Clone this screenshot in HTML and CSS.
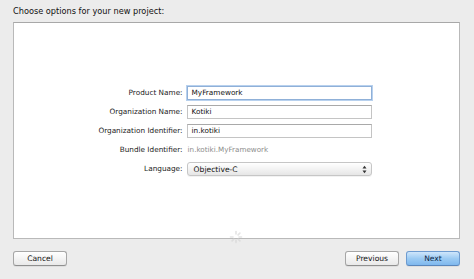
FILE: index.html
```html
<!DOCTYPE html>
<html lang="en">
<head>
    <meta charset="UTF-8">
    <title>Choose options for your new project</title>
    <link rel="stylesheet" href="styles.css">
</head>
<body>
    <div class="sheet">
        <header class="sheet-title">Choose options for your new project:</header>

        <div class="panel">
            <div class="form">
                <label class="label">Product Name:</label>
                <div class="field focused">MyFramework</div>

                <label class="label">Organization Name:</label>
                <div class="field">Kotiki</div>

                <label class="label">Organization Identifier:</label>
                <div class="field">in.kotiki</div>

                <label class="label">Bundle Identifier:</label>
                <div class="static">in.kotiki.MyFramework</div>

                <label class="label">Language:</label>
                <div class="popup">
                    <span>Objective-C</span>
                    <svg class="arrows" width="5" height="9" viewBox="0 0 5 9">
                        <path d="M0.5 3.5 L2.5 0.8 L4.5 3.5 Z" fill="#333"/>
                        <path d="M0.5 5.5 L2.5 8.2 L4.5 5.5 Z" fill="#333"/>
                    </svg>
                </div>
            </div>

            <svg class="spinner" width="14" height="14" viewBox="0 0 14 14">
                <g stroke="#d4d4d4" stroke-width="1.6" stroke-linecap="round">
                    <line x1="7" y1="1.5" x2="7" y2="4"/>
                    <line x1="10.9" y1="3.1" x2="9.1" y2="4.9"/>
                    <line x1="12.5" y1="7" x2="10" y2="7"/>
                    <line x1="10.9" y1="10.9" x2="9.1" y2="9.1"/>
                    <line x1="7" y1="12.5" x2="7" y2="10"/>
                    <line x1="3.1" y1="10.9" x2="4.9" y2="9.1"/>
                    <line x1="1.5" y1="7" x2="4" y2="7"/>
                </g>
            </svg>
        </div>

        <footer class="buttons">
            <button class="btn">Cancel</button>
            <div class="spacer"></div>
            <button class="btn">Previous</button>
            <button class="btn primary">Next</button>
        </footer>
    </div>
</body>
</html>
```

FILE: styles.css
```css
* {
    margin: 0;
    padding: 0;
    box-sizing: border-box;
}
html, body {
    width: 474px;
    height: 279px;
    overflow: hidden;
}
body {
    background-color: #ececec;
    font-family: "DejaVu Sans", "Liberation Sans", sans-serif;
    color: #111;
}
.sheet {
    display: flex;
    flex-direction: column;
    height: 100%;
    padding: 0 14px 0 13px;
}
.sheet-title {
    height: 22px;
    line-height: 22px;
    font-size: 8.2px;
}
.panel {
    position: relative;
    height: 217px;
    background-color: #fff;
    border: 1px solid #b9b9b9;
    border-top-color: #a8a8a8;
    display: flex;
    align-items: center;
    justify-content: center;
}
.form {
    display: grid;
    grid-template-columns: auto 185px;
    grid-auto-rows: 14px;
    column-gap: 4px;
    row-gap: 5px;
    margin-left: -3px;
    margin-top: 1px;
}
.label {
    font-size: 7.3px;
    text-align: right;
    line-height: 14px;
    color: #1c1c1c;
}
.field {
    font-size: 7.3px;
    line-height: 12px;
    padding: 0 4px;
    border: 1px solid #c4c4c4;
    border-top-color: #a9a9a9;
    background-color: #fff;
    color: #111;
}
.field.focused {
    border-color: #8fb0d8;
    box-shadow: 0 0 0 1px #b8d1ee;
}
.static {
    font-size: 7.2px;
    line-height: 14px;
    color: #8c8c8c;
    padding-left: 1px;
}
.popup {
    display: flex;
    align-items: center;
    justify-content: space-between;
    font-size: 7.6px;
    padding: 0 4px 0 6px;
    border: 1px solid #c6c6c6;
    border-radius: 3px;
    background: linear-gradient(#ffffff, #f3f3f3 50%, #e6e6e6);
    box-shadow: 0 1px 0 rgba(0,0,0,0.05);
}
.arrows {
    display: block;
}
.spinner {
    position: absolute;
    left: 215px;
    bottom: -6px;
    opacity: 0.6;
}
.buttons {
    display: flex;
    align-items: flex-start;
    gap: 7px;
    padding-top: 12px;
}
.spacer {
    flex: 1;
}
.btn {
    width: 54px;
    height: 15px;
    font-family: "DejaVu Sans", "Liberation Sans", sans-serif;
    font-size: 7.6px;
    color: #111;
    border: 1px solid #a6a6a6;
    border-bottom-color: #8f8f8f;
    border-radius: 3px;
    background: linear-gradient(#ffffff, #f4f4f4 50%, #e9e9e9);
    box-shadow: 0 1px 0 rgba(0,0,0,0.06);
}
.btn.primary {
    border-color: #6d9bd0;
    border-bottom-color: #5a86bb;
    background: linear-gradient(#cfe6fb, #9ccbf3 50%, #7fb8ee);
    color: #0f2a48;
}
```
